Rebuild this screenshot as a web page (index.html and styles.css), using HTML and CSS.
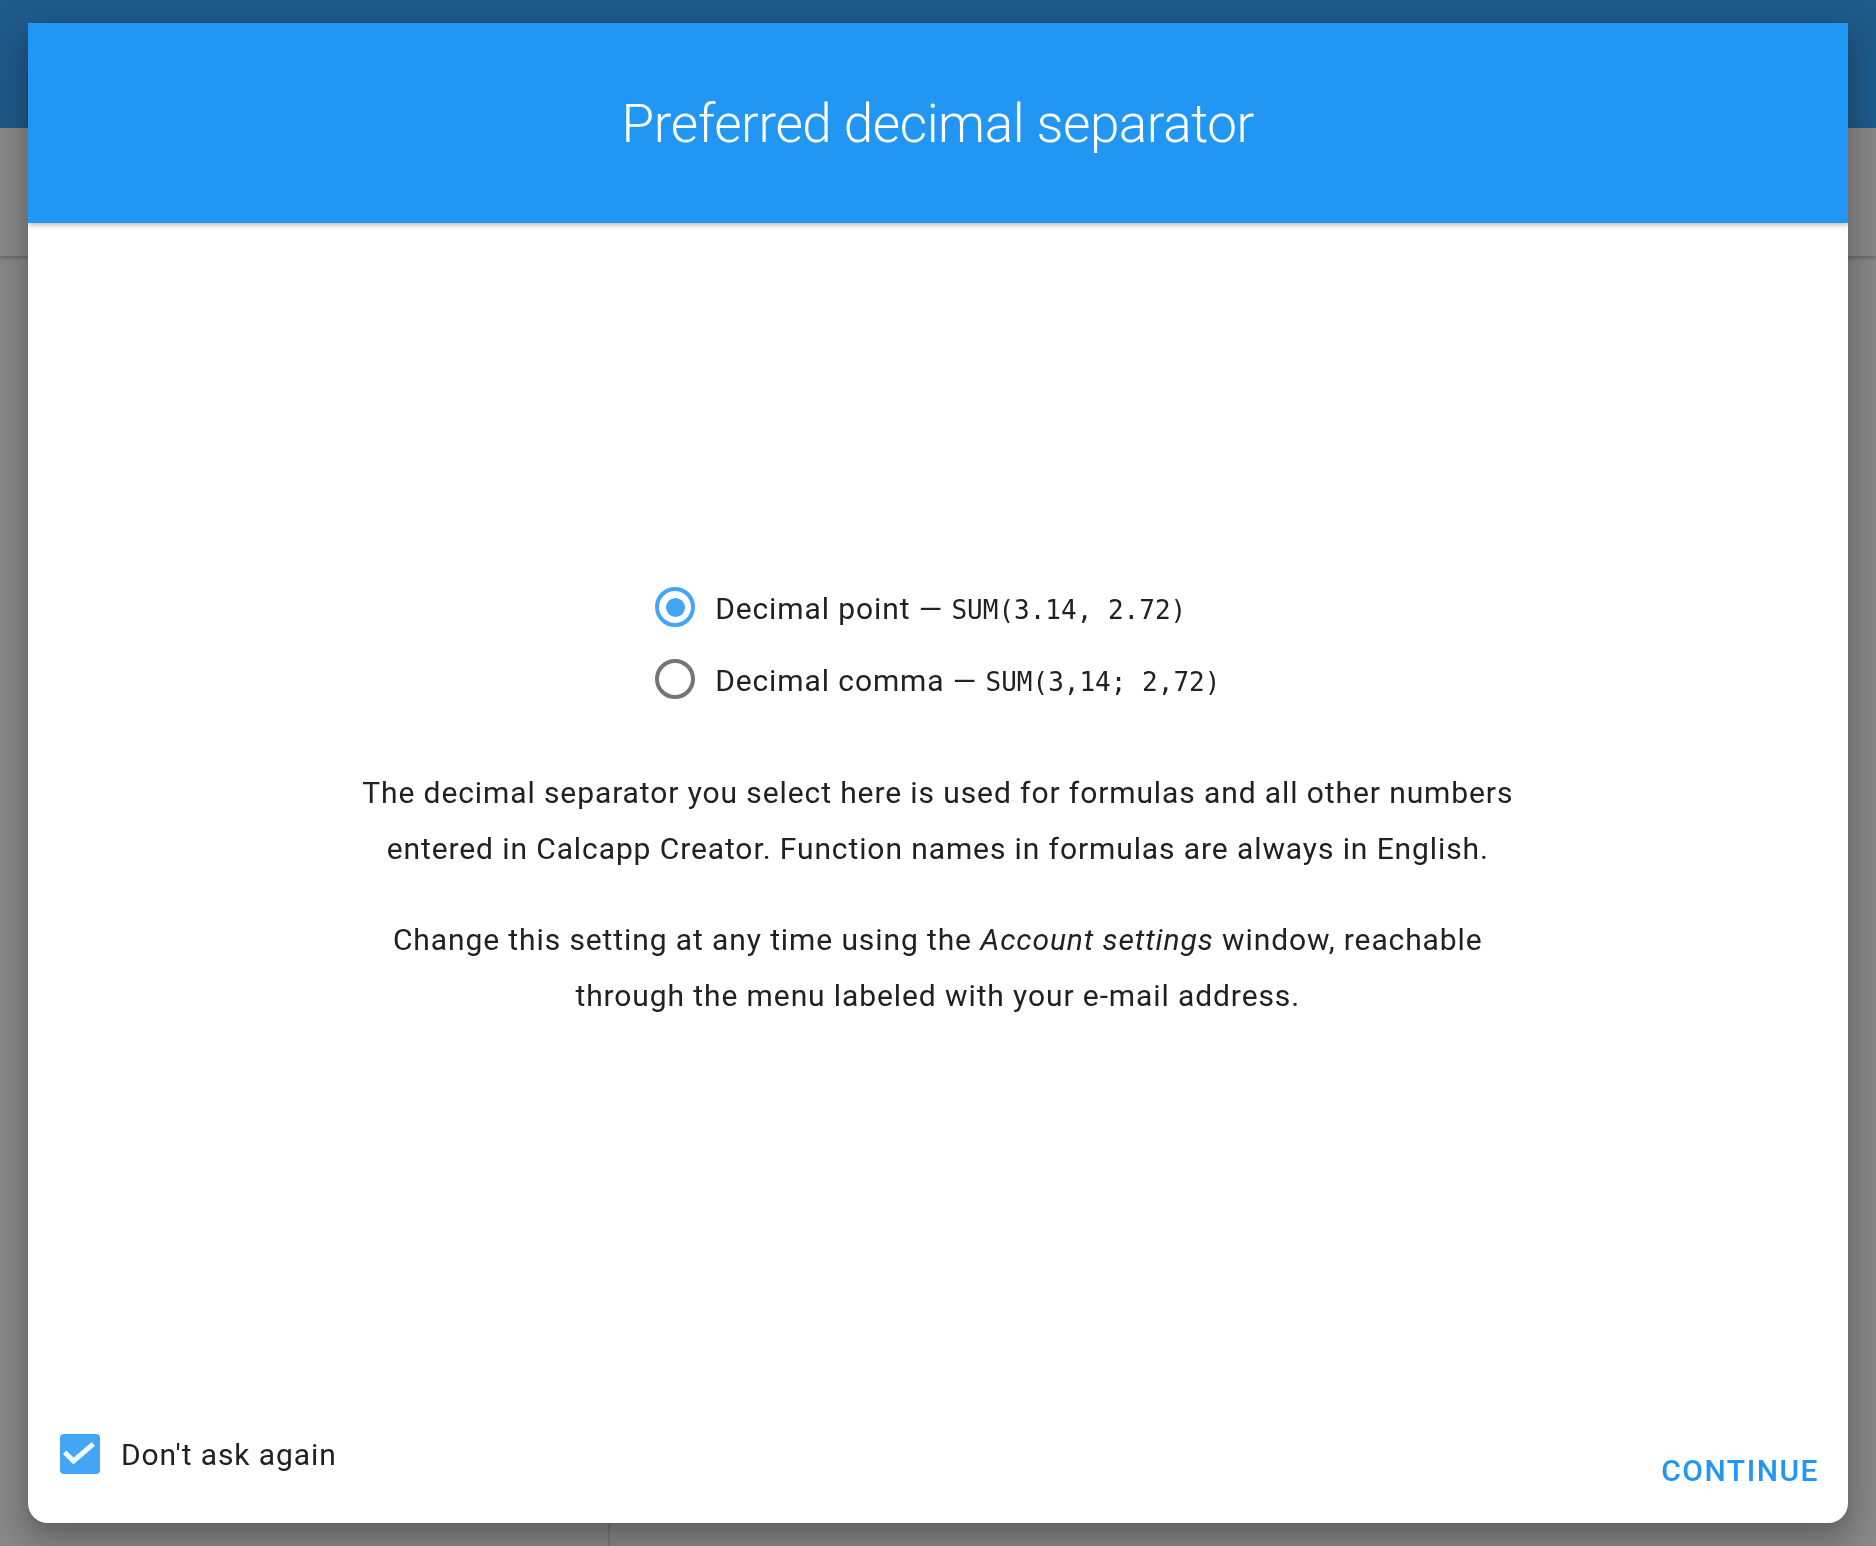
FILE: index.html
```html
<!DOCTYPE html>
<html lang="en">
<head>
  <meta charset="UTF-8">
  <title>Calcapp Creator</title>
  <link rel="stylesheet" href="styles.css">
</head>
<body>
  <div class="app">
    <div class="app-bar"></div>
    <div class="app-toolbar"></div>
    <div class="app-main">
      <div class="app-sidebar"></div>
    </div>
  </div>

  <div class="backdrop">
    <div class="dialog">
      <div class="dialog-header">
        <div class="dialog-title">Preferred decimal separator</div>
      </div>

      <div class="dialog-body">
        <div class="radio-group">
          <label class="radio-row">
            <span class="radio checked"></span>
            <span class="radio-label">Decimal point — <code>SUM(3.14, 2.72)</code></span>
          </label>
          <label class="radio-row">
            <span class="radio"></span>
            <span class="radio-label">Decimal comma — <code>SUM(3,14; 2,72)</code></span>
          </label>
        </div>

        <div class="info">
          <p>The decimal separator you select here is used for formulas and all other numbers entered in Calcapp Creator. Function names in formulas are always in English.</p>
          <p>Change this setting at any time using the <em>Account settings</em> window, reachable through the menu labeled with your e-mail address.</p>
        </div>
      </div>

      <div class="dialog-footer">
        <label class="check-row">
          <span class="checkbox">
            <svg width="40" height="40" viewBox="0 0 40 40">
              <polyline points="6.5,20 13.5,27 31.5,11.5" fill="none" stroke="#eef6fe" stroke-width="5" stroke-linecap="square"/>
            </svg>
          </span>
          <span class="check-label">Don't ask again</span>
        </label>
        <button class="btn-continue">CONTINUE</button>
      </div>
    </div>
  </div>
</body>
</html>
```

FILE: styles.css
```css
body {
  margin: 0;
  font-family: 'Roboto', 'Liberation Sans', sans-serif;
  color: #212121;
  background-color: #8a8a8a;
  height: 100vh;
  overflow: hidden;
}

/* app behind the dialog, already dimmed */
.app {
  display: flex;
  flex-direction: column;
  height: 100vh;
}
.app-bar {
  height: 128px;
  background-color: #1f5b8b;
}
.app-toolbar {
  height: 128px;
  background-color: #8a8a8a;
  box-shadow: 0 2px 4px rgba(0, 0, 0, 0.25);
  position: relative;
}
.app-main {
  flex: 1;
  display: flex;
}
.app-sidebar {
  width: 608px;
  border-right: 2px solid #7a7a7a;
}

.backdrop {
  position: fixed;
  inset: 0;
  display: flex;
  padding: 23px 28px 23px 27.5px;
}
.dialog {
  flex: 1;
  display: flex;
  flex-direction: column;
  background: white;
  border-radius: 0 0 20px 20px;
  box-shadow: 0 18px 40px 8px rgba(0, 0, 0, 0.22), 0 8px 16px rgba(0, 0, 0, 0.12);
  overflow: hidden;
}
.dialog-header {
  height: 200px;
  flex-shrink: 0;
  background-color: #2196f3;
  display: flex;
  justify-content: center;
  align-items: center;
  box-shadow: 0 2px 5px rgba(0, 0, 0, 0.28);
  position: relative;
  z-index: 1;
}
.dialog-title {
  color: white;
  font-size: 53px;
  font-weight: 300;
  letter-spacing: -0.45px;
  padding-top: 1px;
}

.dialog-body {
  flex: 1;
  display: flex;
  flex-direction: column;
  justify-content: center;
  align-items: center;
  padding-bottom: 62px;
  font-size: 30px;
  letter-spacing: 0.9px;
}
.radio-group {
  display: flex;
  flex-direction: column;
  align-items: flex-start;
}
.radio-row {
  height: 72px;
  display: flex;
  align-items: center;
  gap: 20px;
  cursor: pointer;
}
.radio {
  width: 40px;
  height: 40px;
  box-sizing: border-box;
  border: 4px solid #757575;
  border-radius: 50%;
  display: flex;
  justify-content: center;
  align-items: center;
}
.radio.checked {
  border-color: #42a5f5;
}
.radio.checked::after {
  content: '';
  width: 19px;
  height: 19px;
  border-radius: 50%;
  background-color: #42a5f5;
}
.radio-label {
  padding-top: 3px;
}
code {
  font-family: 'DejaVu Sans Mono', 'Liberation Mono', monospace;
  font-size: 26px;
  letter-spacing: 0;
}

.info {
  max-width: 1170px;
  margin-top: 50px;
  text-align: center;
  line-height: 1.875;
}
.info p {
  margin: 0;
}
.info p + p {
  margin-top: 34px;
}

.dialog-footer {
  display: flex;
  justify-content: space-between;
  align-items: flex-end;
  padding: 0 16px 21px 32.5px;
}
.check-row {
  display: flex;
  align-items: center;
  gap: 21px;
  margin-bottom: 28px;
  font-size: 30px;
  letter-spacing: 0.9px;
  cursor: pointer;
}
.checkbox {
  width: 40px;
  height: 40px;
  border-radius: 4px;
  background-color: #42a5f5;
  display: flex;
}
.check-label {
  padding-top: 1px;
}
.btn-continue {
  font-family: 'Roboto', 'Liberation Sans', sans-serif;
  font-size: 30px;
  font-weight: 500;
  letter-spacing: 1.5px;
  line-height: 36px;
  color: #2196f3;
  background: none;
  border: none;
  padding: 12px 13px 13px;
  cursor: pointer;
}
```
